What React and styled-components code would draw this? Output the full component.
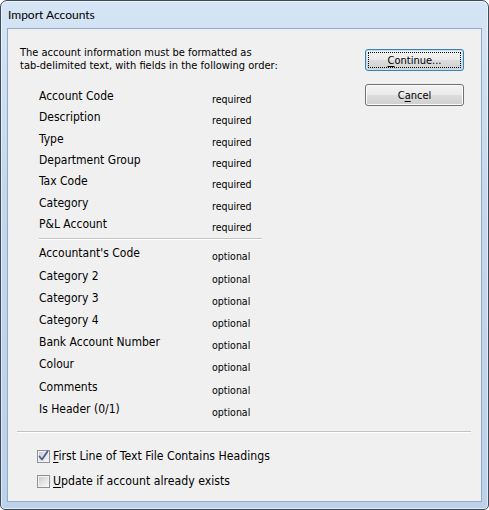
import React from "react";
import styled, { createGlobalStyle } from "styled-components";

const GlobalStyle = createGlobalStyle`
  html, body {
    margin: 0;
    padding: 0;
    background: #ffffff;
  }
  body {
    font-family: "DejaVu Sans", "Liberation Sans", sans-serif;
    font-stretch: condensed;
    color: #000;
  }
`;

const Window = styled.div`
  box-sizing: border-box;
  width: 489px;
  height: 510px;
  display: flex;
  flex-direction: column;
  padding: 0 6px 7px 6px;
  border: 1px solid #3f4b58;
  border-radius: 7px 7px 5px 5px;
  background: linear-gradient(180deg, #d6e5f5 0%, #c3d7ed 40%, #bcd2ea 100%);
  box-shadow: inset 0 0 0 1px rgba(255, 255, 255, 0.55);
`;

const TitleBar = styled.div`
  height: 27px;
  display: flex;
  align-items: center;
  padding-left: 1px;
  font-family: "Lato", "Noto Sans", sans-serif;
  font-stretch: normal;
  font-size: 12px;
  color: #000;
`;

const Client = styled.div`
  flex: 1;
  display: flex;
  flex-direction: column;
  padding: 17px 10px 0 9px;
  border: 1px solid #94aac4;
  background: #f0f0f0;
`;

const Top = styled.div`
  display: flex;
  justify-content: space-between;
  padding: 0 7px 0 3px;
`;

const Intro = styled.p`
  margin: 0;
  font-size: 11px;
  line-height: 13px;
`;

const FieldList = styled.div`
  margin: 14px 0 0 19px;
  display: flex;
  flex-direction: column;
`;

const FieldRow = styled.div`
  display: grid;
  grid-template-columns: 173px auto;
  align-items: start;
  height: ${(p) => p.$h}px;
`;

const FieldName = styled.span`
  font-size: 12px;
  line-height: ${(p) => p.$h}px;
  white-space: nowrap;
`;

const FieldNeed = styled.span`
  margin-top: 3px;
  font-size: 10.5px;
  line-height: ${(p) => p.$h}px;
`;

const Rule = styled.div`
  width: ${(p) => p.$w || "auto"};
  height: 0;
  border-top: 1px solid #c3c3c3;
  border-bottom: 1px solid #ffffff;
  margin: ${(p) => p.$m};
`;

const ButtonColumn = styled.div`
  display: flex;
  flex-direction: column;
  gap: 13px;
  margin-top: 3px;
`;

const Button = styled.button`
  position: relative;
  box-sizing: border-box;
  width: 99px;
  height: 22px;
  padding: 0;
  border: 1px solid ${(p) => (p.$default ? "#3c7fb1" : "#707070")};
  border-radius: 3px;
  background: linear-gradient(180deg, #f2f2f2 0%, #ebebeb 48%, #dddddd 50%, #cfcfcf 100%);
  box-shadow: inset 0 0 0 1px ${(p) => (p.$default ? "#c0e2f6" : "#fcfcfc")};
  font-family: inherit;
  font-stretch: condensed;
  font-size: 11px;
  color: #000;
  cursor: default;

  &::after {
    content: "";
    display: ${(p) => (p.$default ? "block" : "none")};
    position: absolute;
    inset: 2px;
    border: 1px dotted #000;
  }

  u {
    text-decoration-thickness: 1px;
    text-underline-offset: 2px;
  }
`;

const Bottom = styled.div`
  display: flex;
  flex-direction: column;
  gap: 12px;
  padding: 17px 0 0 20px;
`;

const CheckRow = styled.label`
  display: flex;
  align-items: center;
  gap: 3px;
  height: 13px;
  font-size: 12.2px;
  line-height: 13px;

  u {
    text-decoration-thickness: 1px;
    text-underline-offset: 2px;
  }
`;

const Box = styled.span`
  box-sizing: border-box;
  width: 13px;
  height: 13px;
  flex: none;
  display: flex;
  align-items: center;
  justify-content: center;
  border: 1px solid #8e8f8f;
  background: #f4f4f4;
`;

const BoxInner = styled.span`
  position: relative;
  width: 9px;
  height: 9px;
  background: linear-gradient(135deg, #c9ccd1 0%, #e4e5e7 55%, #f4f4f4 100%);

  svg {
    position: absolute;
    left: -1px;
    top: -2px;
  }
`;

const CheckMark = () => (
  <svg width="11" height="12" viewBox="0 0 11 12">
    <path
      d="M1.5 6.5 L4 9.5 L9.5 1.5"
      fill="none"
      stroke="#4a5f97"
      strokeWidth="1.8"
      strokeLinecap="round"
      strokeLinejoin="round"
    />
  </svg>
);

const Checkbox = ({ checked, children }) => (
  <CheckRow>
    <Box>
      <BoxInner>{checked && <CheckMark />}</BoxInner>
    </Box>
    <span>{children}</span>
  </CheckRow>
);

const required = [
  "Account Code",
  "Description",
  "Type",
  "Department Group",
  "Tax Code",
  "Category",
  "P&L Account",
];

const optional = [
  "Accountant's Code",
  "Category 2",
  "Category 3",
  "Category 4",
  "Bank Account Number",
  "Colour",
  "Comments",
  "Is Header (0/1)",
];

const Field = ({ name, need, h }) => (
  <FieldRow $h={h}>
    <FieldName $h={h}>{name}</FieldName>
    <FieldNeed $h={h}>{need}</FieldNeed>
  </FieldRow>
);

export default function App() {
  return (
    <>
      <GlobalStyle />
      <Window>
        <TitleBar>Import Accounts</TitleBar>
        <Client>
          <Top>
            <div>
              <Intro>
                The account information must be formatted as
                <br />
                tab-delimited text, with fields in the following order:
              </Intro>
              <FieldList>
                {required.map((n) => (
                  <Field key={n} name={n} need="required" h={21.33} />
                ))}
                <Rule $w="223px" $m="3px 0 2px 0" />
                {optional.map((n) => (
                  <Field key={n} name={n} need="optional" h={22.23} />
                ))}
              </FieldList>
            </div>
            <ButtonColumn>
              <Button $default>
                <u>C</u>ontinue...
              </Button>
              <Button>
                C<u>a</u>ncel
              </Button>
            </ButtonColumn>
          </Top>
          <Rule $m="11px 0 0 0" />
          <Bottom>
            <Checkbox checked>
              <u>F</u>irst Line of Text File Contains Headings
            </Checkbox>
            <Checkbox>
              <u>U</u>pdate if account already exists
            </Checkbox>
          </Bottom>
        </Client>
      </Window>
    </>
  );
}
